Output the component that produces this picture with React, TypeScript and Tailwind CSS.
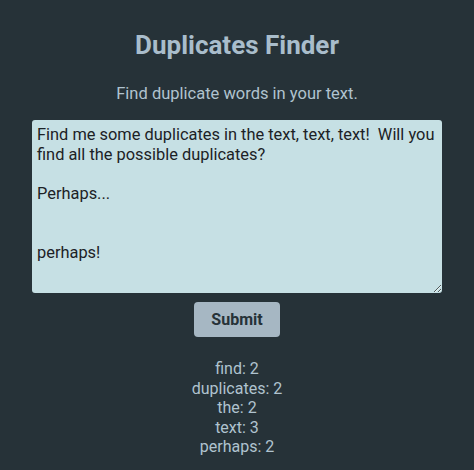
import { useState } from "react";

const initialText = `Find me some duplicates in the text, text, text!  Will you find all the possible duplicates?

Perhaps...


perhaps!`;

// counts words that appear more than once, in order of first appearance
function findDuplicates(text: string) {
    const counts = new Map<string, number>();
    for (const word of text.toLowerCase().match(/[a-z']+/g) ?? []) {
        counts.set(word, (counts.get(word) ?? 0) + 1);
    }
    return [...counts.entries()].filter(([, n]) => n > 1);
}

export default function App() {
    const [text, setText] = useState(initialText);
    const [results, setResults] = useState(() => findDuplicates(initialText));

    return (
        <div className="min-h-[470px] bg-[#263238] font-['Roboto',sans-serif] text-[#b0c3cf]">
            <div className="flex flex-col items-center px-[32px] pt-[30px]">
                <h1 className="text-[26px] font-bold leading-[30px] text-[#a9bdcb]">Duplicates Finder</h1>
                <p className="mt-[24px] text-[16.5px] leading-[20px]">Find duplicate words in your text.</p>

                <textarea
                    value={text}
                    onChange={(e) => setText(e.target.value)}
                    className="mt-[16px] h-[173px] w-full resize-y rounded-[3px] bg-[#c6e0e4] pl-[5px] pr-[3px] pt-[5px] text-[16.4px] leading-[19.7px] text-[#1c2226] outline-none"
                />

                <button
                    onClick={() => setResults(findDuplicates(text))}
                    className="mt-[9px] h-[35px] w-[86px] rounded-[4px] bg-[#a6b7c3] text-[16px] font-bold text-[#263238]"
                >
                    Submit
                </button>

                <ul className="mt-[22px] text-center text-[16px] leading-[19.5px]">
                    {results.map(([word, count]) => (
                        <li key={word}>
                            {word}: {count}
                        </li>
                    ))}
                </ul>
            </div>
        </div>
    );
}
